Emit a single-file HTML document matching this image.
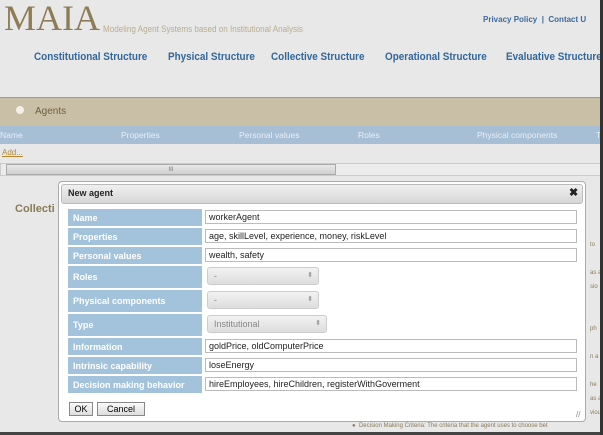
<!DOCTYPE html>
<html><head><style>
*{margin:0;padding:0;box-sizing:border-box}
body{width:603px;height:435px;overflow:hidden;background:#e8e8e8;font-family:"Liberation Sans",sans-serif;position:relative}
.a{position:absolute;white-space:nowrap}
.nav{position:absolute;top:51px;font-size:11px;color:#336699;font-weight:bold;white-space:nowrap;transform:scaleX(.9);transform-origin:left}
.lbl{position:absolute;left:68px;width:134px;background:#a3c2dc;color:#fff;font-weight:bold;font-size:9px;padding-left:5px;display:flex;align-items:center;white-space:nowrap}
.inp{position:absolute;left:205px;width:372px;height:14px;background:#fff;border:1px solid #bbb;font-size:9px;padding-left:3px;line-height:12px;color:#222}
.sel{position:absolute;left:207px;width:112px;height:18px;background:linear-gradient(#f2f2f2,#ddd);border:1px solid #ccc;border-radius:3px;font-size:9px;color:#888;padding-left:6px;line-height:16px}
.sel:after{content:"⬍";position:absolute;right:5px;font-size:7px;color:#999}
.btn{position:absolute;top:402px;height:14px;border:1px solid #888;background:linear-gradient(#fafafa,#ddd);font-size:9px;line-height:12px;text-align:center}
</style></head><body>
<div class="a" style="left:4px;top:0;font-family:'Liberation Serif',serif;font-size:36px;color:#8e7c56;line-height:37px">MAIA</div>
<div class="a" style="left:103px;top:24px;font-size:9px;color:#b9ad8d;transform:scaleX(.9);transform-origin:left">Modeling Agent Systems based on Institutional Analysis</div>
<div class="a" style="left:483px;top:15px;font-size:8px;color:#3d6a9c;font-weight:bold">Privacy Policy &nbsp;| &nbsp;Contact U</div>
<div class="nav" style="left:34px">Constitutional Structure</div>
<div class="nav" style="left:168px">Physical Structure</div>
<div class="nav" style="left:271px">Collective Structure</div>
<div class="nav" style="left:385px">Operational Structure</div>
<div class="nav" style="left:506px">Evaluative Structure</div>
<div class="a" style="left:0;top:97px;width:603px;height:29px;background:#c9bea6;border-top:1px solid #a89a7c"></div>
<div class="a" style="left:16px;top:106px;width:8px;height:8px;border-radius:50%;background:#f4f0e8"></div>
<div class="a" style="left:35px;top:106px;font-size:10px;color:#6f6140">Agents</div>
<div class="a" style="left:0;top:126px;width:603px;height:18px;background:#a6bfd5;color:#e8eef5;font-size:8.5px;line-height:18px">
<span class="a" style="left:0">Name</span><span class="a" style="left:121px">Properties</span><span class="a" style="left:239px">Personal values</span><span class="a" style="left:358px">Roles</span><span class="a" style="left:477px">Physical components</span><span class="a" style="left:596px">T</span></div>
<div class="a" style="left:2px;top:148px;font-size:8px;color:#b8862e;text-decoration:underline">Add...</div>
<div class="a" style="left:0;top:163px;width:603px;height:13px;background:#ececec;border:1px solid #ccc"></div>
<div class="a" style="left:6px;top:164px;width:330px;height:11px;background:linear-gradient(#e8e8e8,#cfcfcf);border:1px solid #aaa;font-size:6px;text-align:center;color:#777;line-height:10px">III</div>
<div class="a" style="left:15px;top:203px;font-size:11px;color:#8a7a58;font-weight:bold">Collecti</div>
<div class="a" style="left:590px;top:238px;font-size:6px;color:#8a7a58;line-height:14px">to<br><br>as a<br>sio<br><br><br>ph<br><br>n a<br><br>he<br>as a<br>viou</div>
<div class="a" style="left:352px;top:423px;font-size:6px;color:#8a7a58">● &nbsp;Decision Making Criteria: The criteria that the agent uses to choose bet</div>
<div class="a" style="left:0;top:432px;width:603px;height:3px;background:#444"></div>
<div class="a" style="left:600px;top:0;width:3px;height:435px;background:#333"></div>
<div class="a" style="left:58px;top:181px;width:528px;height:241px;background:#fff;border:1px solid #aaa;border-radius:4px"></div>
<div class="a" style="left:61px;top:184px;width:522px;height:20px;background:linear-gradient(#f0f0f0,#d6d6d6);border:1px solid #bbb;border-radius:3px"></div>
<div class="a" style="left:68px;top:188px;font-size:9px;font-weight:bold;color:#222">New agent</div>
<div class="a" style="left:569px;top:186px;font-size:11px;font-weight:bold;color:#222">✖</div>
<div class="lbl" style="top:209px;height:17px">Name</div><div class="inp" style="top:210px">workerAgent</div>
<div class="lbl" style="top:228px;height:17px">Properties</div><div class="inp" style="top:229px">age, skillLevel, experience, money, riskLevel</div>
<div class="lbl" style="top:247px;height:17px">Personal values</div><div class="inp" style="top:248px">wealth, safety</div>
<div class="lbl" style="top:266px;height:22px">Roles</div><div class="sel" style="top:267px">-</div>
<div class="lbl" style="top:290px;height:22px">Physical components</div><div class="sel" style="top:291px">-</div>
<div class="lbl" style="top:314px;height:22px">Type</div><div class="sel" style="top:315px;width:120px">Institutional</div>
<div class="lbl" style="top:338px;height:17px">Information</div><div class="inp" style="top:339px">goldPrice, oldComputerPrice</div>
<div class="lbl" style="top:357px;height:17px">Intrinsic capability</div><div class="inp" style="top:358px">loseEnergy</div>
<div class="lbl" style="top:376px;height:17px">Decision making behavior</div><div class="inp" style="top:377px">hireEmployees, hireChildren, registerWithGoverment</div>
<div class="btn" style="left:69px;width:24px">OK</div>
<div class="btn" style="left:97px;width:48px">Cancel</div>
<div class="a" style="left:576px;top:410px;font-size:8px;color:#888">//</div>
</body></html>
